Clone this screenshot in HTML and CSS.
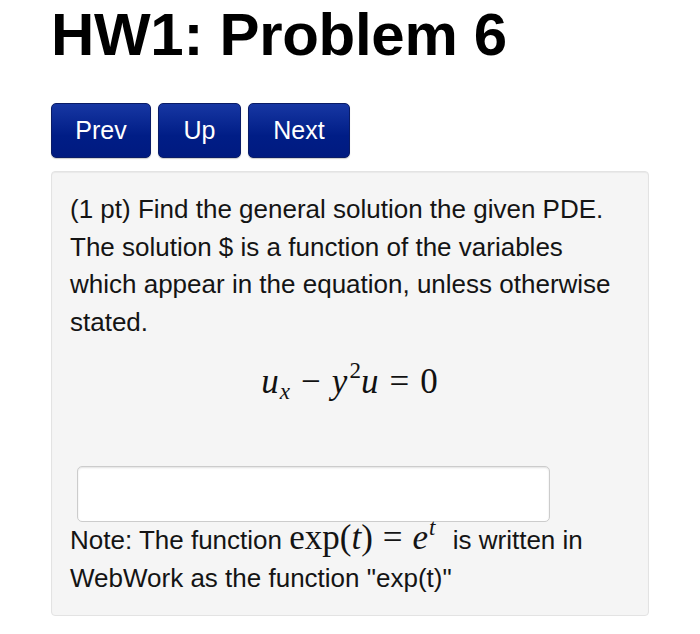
FILE: index.html
```html
<!DOCTYPE html>
<html>
<head>
<meta charset="utf-8">
<link rel="stylesheet" href="styles.css">
</head>
<body>
<h1 class="title">HW1: Problem 6</h1>
<nav class="nav">
  <a class="btn btn-prev">Prev</a>
  <a class="btn btn-up">Up</a>
  <a class="btn btn-next">Next</a>
</nav>
<div class="panel">
  <p class="text">(1 pt) Find the general solution the given PDE. The solution $ is a function of the variables which appear in the equation, unless otherwise stated.</p>
  <div class="equation"><span class="mi">u</span><sub class="sub mi">x</sub><span class="op">−</span><span class="mi">y</span><sup class="sup">2</sup><span class="mi">u</span><span class="op">=</span><span class="mn">0</span></div>
  <div class="answer"><input class="answer-input" type="text"></div>
  <p class="note">Note: The function <span class="math">exp(<span class="mi">t</span>)<span class="op-small">=</span><span class="mi">e</span><sup class="sup-t mi">t</sup></span> is written in WebWork as the function "exp(t)"</p>
</div>
</body>
</html>
```
FILE: styles.css
```css
html, body {
  margin: 0;
  padding: 0;
  background: #ffffff;
}
body {
  padding: 0 51px;
  font-family: "Liberation Sans", Arial, sans-serif;
  color: #111;
}
.title {
  margin: 0;
  padding-top: 4px;
  font-size: 60px;
  line-height: 62px;
  font-weight: bold;
  color: #000;
  letter-spacing: -0.3px;
}
.nav {
  display: flex;
  gap: 7px;
  margin-top: 37px;
}
.btn {
  display: flex;
  align-items: center;
  justify-content: center;
  height: 53px;
  padding: 0 24px;
  border: 1px solid #0a1c66;
  border-radius: 5px;
  background: linear-gradient(#1737a3, #001d86 60%, #001a80);
  color: #fff;
  font-size: 25px;
  box-shadow: 0 1px 1px rgba(0,0,0,0.2);
}
.btn-prev { width: 50px; }
.btn-up { width: 33px; }
.btn-next { width: 52px; }
.panel {
  margin-top: 13px;
  width: 559px;
  padding: 19px 19px 18px 18px;
  background: #f5f5f5;
  border: 1px solid #e3e3e3;
  border-radius: 4px;
  box-shadow: inset 0 1px 1px rgba(0,0,0,0.05);
  font-size: 26px;
  line-height: 37.5px;
  color: #141414;
}
.text {
  margin: 0;
}
.equation {
  display: block;
  text-align: center;
  margin-top: 21px;
  height: 40px;
  font-family: "Liberation Serif", "Times New Roman", serif;
  font-size: 35px;
  line-height: 40px;
  color: #111;
}
.mi {
  font-style: italic;
}
.sub {
  font-size: 23px;
  line-height: 0;
  vertical-align: -6px;
  margin-left: 1px;
}
.sup {
  font-size: 23px;
  line-height: 0;
  vertical-align: 15px;
  margin-left: 2px;
}
.op {
  margin: 0 11px;
}
.answer {
  margin-top: 64px;
  padding-left: 7px;
}
.answer-input {
  display: block;
  box-sizing: border-box;
  width: 473px;
  height: 56px;
  margin: 0;
  border: 1px solid #cccccc;
  border-radius: 5px;
  background: #fff;
  box-shadow: inset 0 1px 2px rgba(0,0,0,0.12);
  outline: none;
}
.note {
  margin: 0;
}
.math {
  font-family: "Liberation Serif", "Times New Roman", serif;
  font-size: 35px;
  line-height: 0;
}
.op-small {
  margin: 0 10px;
}
.sup-t {
  font-size: 23px;
  line-height: 0;
  vertical-align: 14px;
  margin-left: 1px;
  margin-right: 10px;
}
```
